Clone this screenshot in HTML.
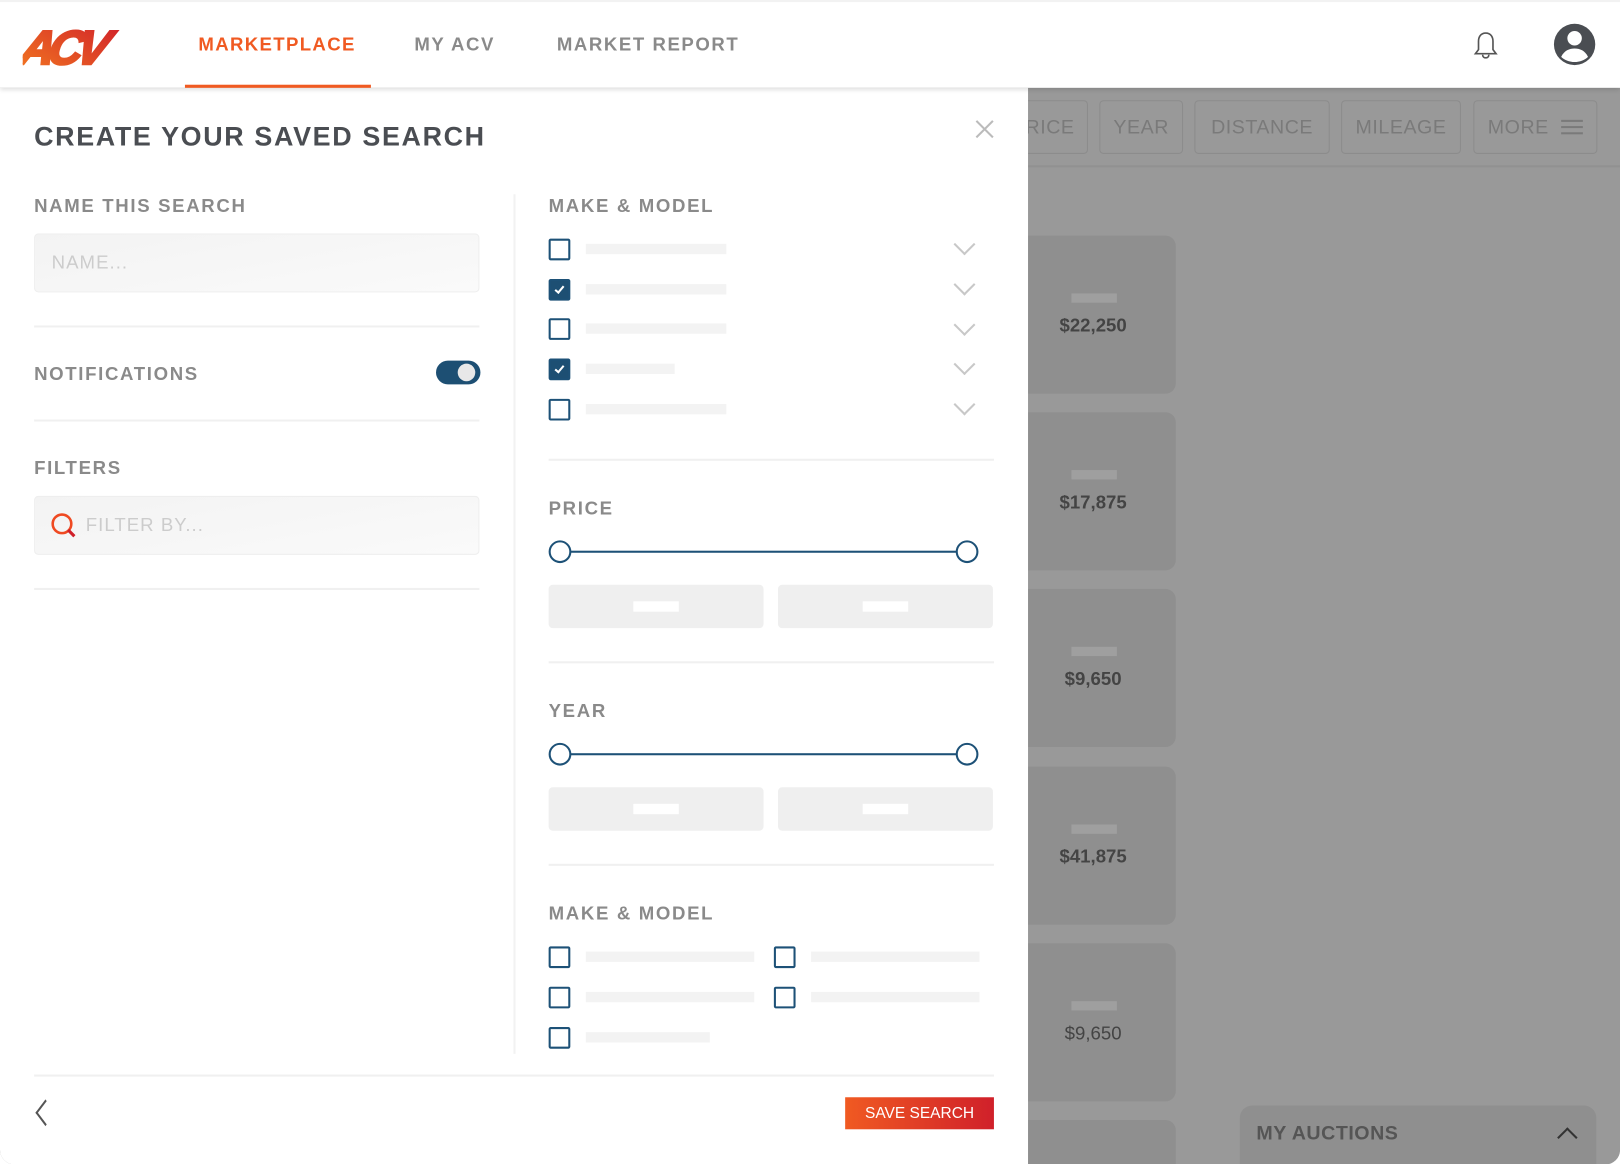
<!DOCTYPE html>
<html><head><meta charset="utf-8"><style>
html,body{margin:0;padding:0;width:1620px;height:1164px;overflow:hidden;background:#fff;font-family:"Liberation Sans",sans-serif}
#w{position:relative;width:1620px;height:1164px;overflow:hidden}
#s{position:absolute;left:0;top:0;width:1568px;height:1127px;transform:scale(1.0332);transform-origin:0 0;overflow:hidden;border-radius:0 0 14px 14px;background:#999}
.a{position:absolute}
.lbl{position:absolute;font-size:18px;font-weight:bold;color:#8a8a8a;letter-spacing:1.6px;line-height:20px}
.sep{position:absolute;height:2px;background:#f0f0f0}
.cb{position:absolute;width:17px;height:17px;border:2px solid #1d5177;border-radius:2px;background:#fff}
.cb.on{background:#1d4f73}
.cb.on:after{content:"";position:absolute;left:6px;top:3px;width:3px;height:7px;border:solid #fff;border-width:0 2px 2px 0;transform:rotate(40deg)}
.bar{position:absolute;height:10px;background:#f3f3f3}
.chev{position:absolute;width:13px;height:13px;border:solid #c8c8c8;border-width:0 2px 2px 0;transform:rotate(45deg)}
.knob{position:absolute;width:18px;height:18px;border:2px solid #1d5177;border-radius:50%;background:#fff}
.box{position:absolute;height:42px;background:#efefef;border-radius:4px}
.box:after{content:"";position:absolute;left:50%;top:16px;width:44px;height:10px;margin-left:-22px;background:#fff}
.card{position:absolute;left:985px;width:153px;height:153px;background:#8f8f8f;border-radius:10px}
.card i{position:absolute;left:52px;top:56px;width:44px;height:9px;background:#9f9f9f}
.card b{position:absolute;left:-2px;width:150px;top:77px;text-align:center;font-size:18px;color:#444}
.chip{position:absolute;top:97px;height:52px;border:1px solid #8c8c8c;border-radius:4px;box-sizing:border-box;color:#7a7a7a;font-size:19px;line-height:52px;text-align:center;letter-spacing:.5px}
</style></head><body><div id="w"><div id="s">
<div class="a" style="left:995px;top:160px;width:573px;height:2px;background:#919191"></div>
<div class="chip" style="left:975px;width:78px;text-align:right;padding-right:12px">RICE</div>
<div class="chip" style="left:1064px;width:81px">YEAR</div>
<div class="chip" style="left:1156px;width:131px">DISTANCE</div>
<div class="chip" style="left:1298px;width:116px">MILEAGE</div>
<div class="chip" style="left:1426px;width:120px;text-align:left;padding-left:13px">MORE<span style="position:absolute;left:84px;top:18px;width:21px;height:2px;background:#7a7a7a;box-shadow:0 6px 0 #7a7a7a,0 12px 0 #7a7a7a"></span></div>
<div class="card" style="top:228px"><i></i><b>$22,250</b></div>
<div class="card" style="top:399px"><i></i><b>$17,875</b></div>
<div class="card" style="top:570px"><i></i><b>$9,650</b></div>
<div class="card" style="top:742px"><i></i><b>$41,875</b></div>
<div class="card" style="top:913px"><i></i><b style="font-weight:normal">$9,650</b></div>
<div class="card" style="top:1084px;height:43px;border-radius:10px 10px 0 0"></div>
<div class="a" style="left:1200px;top:1070px;width:345px;height:57px;background:#8f8f8f;border-radius:12px 12px 0 0"></div>
<div class="a" style="left:1216px;top:1087px;font-size:19px;font-weight:bold;color:#555;letter-spacing:.5px">MY AUCTIONS</div>
<div class="a" style="left:1510px;top:1094px;width:12px;height:12px;border:solid #333;border-width:2px 0 0 2px;transform:rotate(45deg)"></div>
<div class="a" style="left:0;top:85px;width:995px;height:1042px;background:#fff"></div>
<div class="a" style="left:0;top:0;width:1568px;height:85px;background:#fff;box-shadow:0 2px 4px rgba(0,0,0,.12)"></div>
<div class="a" style="left:0;top:0;width:1568px;height:2px;background:#f2f2f2"></div>
<svg class="a" style="left:22px;top:18px" width="96" height="50"><defs><linearGradient id="g" x1="0" y1="1" x2="1" y2="0"><stop offset="0" stop-color="#f47b20"/><stop offset="1" stop-color="#d0202a"/></linearGradient></defs><text x="6" y="44" font-family="Liberation Sans" font-weight="bold" font-style="italic" font-size="46" fill="url(#g)" stroke="url(#g)" stroke-width="2.5" letter-spacing="-6" transform="skewX(-14)">ACV</text></svg>
<div class="a" style="left:192px;top:33px;font-size:18px;font-weight:bold;color:#f05a22;letter-spacing:1.3px">MARKETPLACE</div>
<div class="a" style="left:179px;top:82px;width:180px;height:3px;background:#f05a22"></div>
<div class="a" style="left:401px;top:33px;font-size:18px;font-weight:bold;color:#8a8a8a;letter-spacing:1.5px">MY ACV</div>
<div class="a" style="left:539px;top:33px;font-size:18px;font-weight:bold;color:#8a8a8a;letter-spacing:1.5px">MARKET REPORT</div>
<svg class="a" style="left:1424px;top:29px" width="28" height="30" viewBox="0 0 28 30"><path d="M14 3c-5 0-7 4-7 8v8l-3 4h20l-3-4v-8c0-4-2-8-7-8zM11 24c0 2 1.5 3 3 3s3-1 3-3" fill="none" stroke="#555" stroke-width="1.6"/></svg>
<svg class="a" style="left:1503px;top:22px" width="42" height="42" viewBox="0 0 42 42"><circle cx="21" cy="21" r="20" fill="#4a4d52"/><circle cx="21" cy="15" r="7" fill="#fff"/><path d="M8 33c3-6 8-8 13-8s10 2 13 8c-3 3-8 5-13 5s-10-2-13-5z" fill="#fff"/></svg>
<div class="a" style="left:33px;top:117px;font-size:26px;font-weight:bold;color:#4a4d52;letter-spacing:1.6px">CREATE YOUR SAVED SEARCH</div>
<svg class="a" style="left:943px;top:115px" width="20" height="20"><path d="M2 2l16 16M18 2L2 18" stroke="#bbb" stroke-width="2"/></svg>
<div class="lbl" style="left:33px;top:189px">NAME THIS SEARCH</div>
<div class="a" style="left:33px;top:226px;width:431px;height:57px;background:linear-gradient(170deg,#f3f3f3,#fafafa);border:1px solid #eee;border-radius:4px;box-sizing:border-box"></div>
<div class="a" style="left:50px;top:244px;font-size:18px;color:#ccc;letter-spacing:1px">NAME...</div>
<div class="sep" style="left:33px;top:315px;width:431px"></div>
<div class="lbl" style="left:33px;top:352px">NOTIFICATIONS</div>
<div class="a" style="left:422px;top:349px;width:43px;height:23px;border-radius:12px;background:#1d4f73"></div>
<div class="a" style="left:443px;top:352px;width:17px;height:17px;border-radius:50%;background:#e8e8e8"></div>
<div class="sep" style="left:33px;top:406px;width:431px"></div>
<div class="lbl" style="left:33px;top:443px">FILTERS</div>
<div class="a" style="left:33px;top:480px;width:431px;height:57px;background:linear-gradient(170deg,#f3f3f3,#fafafa);border:1px solid #eee;border-radius:4px;box-sizing:border-box"></div>
<svg class="a" style="left:48px;top:495px" width="28" height="28"><circle cx="12" cy="12" r="9" fill="none" stroke="#ef4a22" stroke-width="2.5"/><path d="M18 18l6 6" stroke="#d0202a" stroke-width="3"/></svg>
<div class="a" style="left:83px;top:498px;font-size:18px;color:#ccc;letter-spacing:1px">FILTER BY...</div>
<div class="sep" style="left:33px;top:569px;width:431px"></div>
<div class="a" style="left:497px;top:188px;width:2px;height:832px;background:#f2f2f2"></div>
<div class="lbl" style="left:531px;top:189px">MAKE &amp; MODEL</div>
<div class="cb" style="left:531px;top:231px"></div><div class="bar" style="left:567px;top:236px;width:136px"></div><div class="chev" style="left:926px;top:229px"></div>
<div class="cb on" style="left:531px;top:270px"></div><div class="bar" style="left:567px;top:275px;width:136px"></div><div class="chev" style="left:926px;top:268px"></div>
<div class="cb" style="left:531px;top:308px"></div><div class="bar" style="left:567px;top:313px;width:136px"></div><div class="chev" style="left:926px;top:307px"></div>
<div class="cb on" style="left:531px;top:347px"></div><div class="bar" style="left:567px;top:352px;width:86px"></div><div class="chev" style="left:926px;top:345px"></div>
<div class="cb" style="left:531px;top:386px"></div><div class="bar" style="left:567px;top:391px;width:136px"></div><div class="chev" style="left:926px;top:384px"></div>
<div class="sep" style="left:531px;top:444px;width:431px"></div>
<div class="lbl" style="left:531px;top:482px">PRICE</div>
<div class="a" style="left:541px;top:533px;width:396px;height:2px;background:#1d5177"></div>
<div class="knob" style="left:531px;top:523px"></div><div class="knob" style="left:925px;top:523px"></div>
<div class="box" style="left:531px;top:566px;width:208px"></div><div class="box" style="left:753px;top:566px;width:208px"></div>
<div class="sep" style="left:531px;top:640px;width:431px"></div>
<div class="lbl" style="left:531px;top:678px">YEAR</div>
<div class="a" style="left:541px;top:729px;width:396px;height:2px;background:#1d5177"></div>
<div class="knob" style="left:531px;top:719px"></div><div class="knob" style="left:925px;top:719px"></div>
<div class="box" style="left:531px;top:762px;width:208px"></div><div class="box" style="left:753px;top:762px;width:208px"></div>
<div class="sep" style="left:531px;top:836px;width:431px"></div>
<div class="lbl" style="left:531px;top:874px">MAKE &amp; MODEL</div>
<div class="cb" style="left:531px;top:916px"></div><div class="bar" style="left:567px;top:921px;width:163px"></div>
<div class="cb" style="left:749px;top:916px"></div><div class="bar" style="left:785px;top:921px;width:163px"></div>
<div class="cb" style="left:531px;top:955px"></div><div class="bar" style="left:567px;top:960px;width:163px"></div>
<div class="cb" style="left:749px;top:955px"></div><div class="bar" style="left:785px;top:960px;width:163px"></div>
<div class="cb" style="left:531px;top:994px"></div><div class="bar" style="left:567px;top:999px;width:120px"></div>
<div class="sep" style="left:33px;top:1040px;width:929px"></div>
<div class="a" style="left:36px;top:1069px;width:14px;height:14px;border:solid #555;border-width:0 0 2px 2px;transform:rotate(45deg) skew(8deg,8deg)"></div>
<div class="a" style="left:818px;top:1062px;width:144px;height:31px;background:linear-gradient(90deg,#f05a22,#d0202a);color:#fff;font-size:15px;line-height:31px;text-align:center">SAVE SEARCH</div>
</div></div></body></html>
